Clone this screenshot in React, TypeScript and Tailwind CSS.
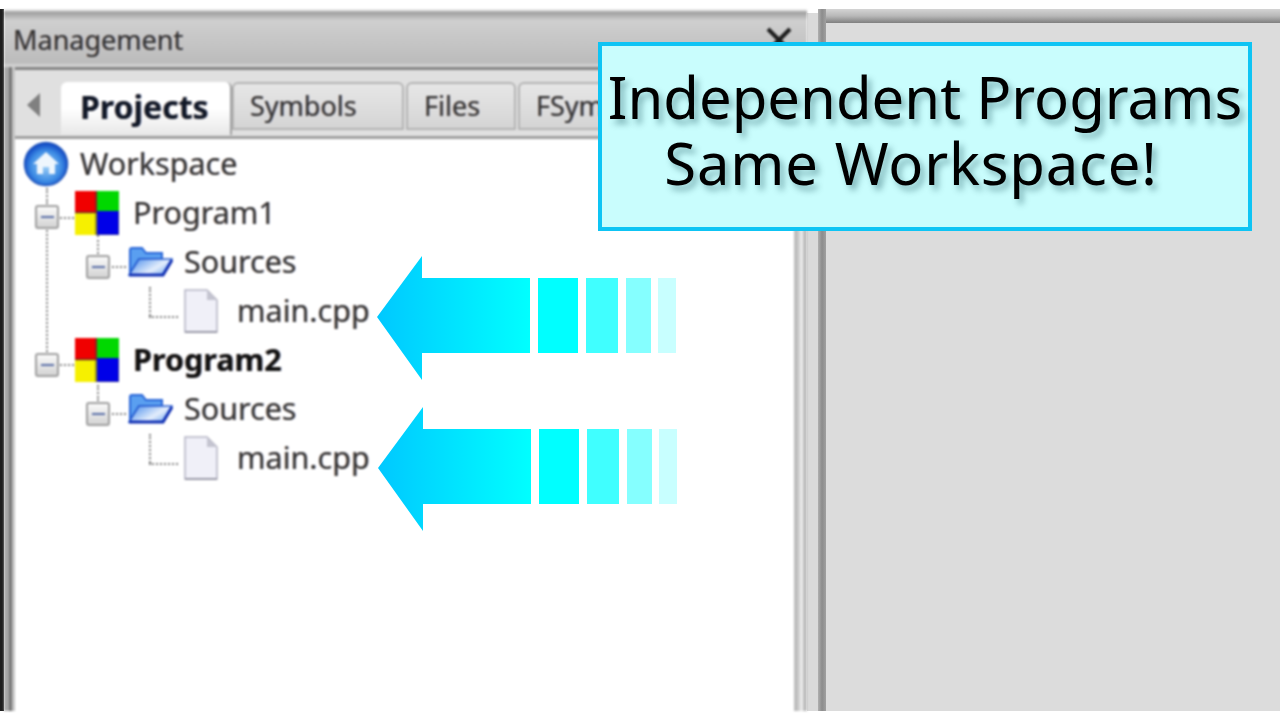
const uiFont = "[font-family:'Noto_Sans',sans-serif]";
const fringe =
  "[text-shadow:-0.6px_0_0_rgba(200,110,40,0.45),0.6px_0_0_rgba(40,90,200,0.45)]";

function Dots({ className }: { className: string }) {
  return <div className={`absolute border-dotted border-[#808080] ${className}`} />;
}

function HomeIcon() {
  return (
    <svg width="46" height="46" viewBox="0 0 46 46">
      <defs>
        <radialGradient id="globe" cx="50%" cy="55%" r="55%">
          <stop offset="0%" stopColor="#9fd0f7" />
          <stop offset="65%" stopColor="#3c8be4" />
          <stop offset="100%" stopColor="#0b3fc0" />
        </radialGradient>
      </defs>
      <circle cx="23" cy="23" r="21.5" fill="url(#globe)" stroke="#2458bb" strokeWidth="1.5" />
      <path d="M23 11 L36 23 L32 23 L32 33 L26 33 L26 26 L20 26 L20 33 L14 33 L14 23 L10 23 Z" fill="#eef6fd" />
    </svg>
  );
}

function ProjectIcon() {
  return (
    <svg width="44" height="44" viewBox="0 0 44 44">
      <rect x="0" y="0" width="22" height="22" fill="#f00000" />
      <rect x="22" y="0" width="22" height="20" fill="#00d800" />
      <rect x="0" y="22" width="22" height="22" fill="#f6f000" />
      <rect x="22" y="20" width="22" height="24" fill="#0000e8" />
      <path d="M0 21.5 H21 V44 M21 21 V0" stroke="#3a3a3a" strokeWidth="1.5" fill="none" opacity="0.7" />
      <path d="M21 44 H44 V20" stroke="#555" strokeWidth="1.5" fill="none" opacity="0.6" />
    </svg>
  );
}

function FolderIcon() {
  return (
    <svg width="46" height="30" viewBox="0 0 46 30">
      <defs>
        <linearGradient id="folder" x1="0" y1="0" x2="1" y2="0.6">
          <stop offset="0%" stopColor="#3f86ea" />
          <stop offset="70%" stopColor="#e4eefc" />
          <stop offset="100%" stopColor="#8db8f2" />
        </linearGradient>
      </defs>
      <path d="M3 26 L3 3 Q3 1 5 1 L15 1 L19 6 L35 6 L35 12 L12 12 Z" fill="#5a9ff0" stroke="#2a66d8" strokeWidth="2" />
      <path d="M2 28 L12 12 L45 12 L36 28 Z" fill="url(#folder)" stroke="#2a5fd0" strokeWidth="1.5" />
      <path d="M2 28 H36 L45 13" fill="none" stroke="#0f2fb4" strokeWidth="3" />
    </svg>
  );
}

function FileIcon() {
  return (
    <svg width="34" height="44" viewBox="0 0 34 44">
      <path d="M1 1 H23 L33 11 V43 H1 Z" fill="#f0f0f8" stroke="#b4b4c4" strokeWidth="1.5" />
      <path d="M23 1 V11 H33 Z" fill="#c4c4d0" />
      <path d="M1 43 H33" stroke="#9a9aa8" strokeWidth="2" />
    </svg>
  );
}

function Collapse({ className }: { className: string }) {
  return (
    <div
      className={`absolute w-[24px] h-[24px] rounded-[3px] border-2 border-[#a0a0a0] bg-gradient-to-b from-[#fafafa] to-[#d4d4d4] flex items-center justify-center ${className}`}
    >
      <div className="w-[13px] h-[2px] bg-[#5a6fa8]" />
    </div>
  );
}

function FadeArrow({ className }: { className: string }) {
  return (
    <div className={`absolute flex items-center h-[124px] ${className}`}>
      <svg width="153" height="124" viewBox="0 0 153 124" className="shrink-0">
        <defs>
          <linearGradient id="arrowFill" x1="0" y1="0" x2="1" y2="0">
            <stop offset="0%" stopColor="#00c8ff" />
            <stop offset="100%" stopColor="#00ffff" />
          </linearGradient>
        </defs>
        <path d="M0 61 L45 0 L45 22 L153 22 L153 97 L45 97 L45 124 Z" fill="url(#arrowFill)" />
      </svg>
      <div className="ml-[8px] w-[40px] h-[75px] mt-[-5px] bg-[#00ffff]" />
      <div className="ml-[8px] w-[32px] h-[75px] mt-[-5px] bg-[#40ffff]" />
      <div className="ml-[8px] w-[25px] h-[75px] mt-[-5px] bg-[#85ffff]" />
      <div className="ml-[7px] w-[18px] h-[75px] mt-[-5px] bg-[#c8ffff]" />
    </div>
  );
}

function Tab({ label, width, active }: { label: string; width: string; active?: boolean }) {
  return (
    <div
      className={
        active
          ? `${width} h-[53px] pl-[19px] pb-[4px] rounded-t-[6px] bg-gradient-to-b from-white via-white to-[#e8e8e8] border-r-2 border-[#a0a0a0] flex items-center text-[32px] font-bold text-[#111827] ${fringe}`
          : `${width} h-[48px] mr-[2px] pl-[16px] pt-[1px] rounded-t-[6px] border-2 border-[#b4b4b4] bg-gradient-to-b from-[#e6e6e6] via-[#dedede] to-[#d4d4d4] flex items-center text-[27px] text-[#333] ${fringe}`
      }
    >
      {label}
    </div>
  );
}

function Row({ left, icon, label, bold }: { left: string; icon: React.ReactNode; label: string; bold?: boolean }) {
  return (
    <div className={`h-[49px] flex items-center ${left}`}>
      {icon}
      <span className={`${bold ? "font-bold text-[#111]" : "text-[#333]"} text-[30.5px] ${fringe}`}>{label}</span>
    </div>
  );
}

export default function App() {
  return (
    <div className={`w-[1280px] h-[720px] bg-white flex flex-col overflow-hidden relative ${uiFont}`}>
      <div className="h-[9px] shrink-0" />
      <div className="h-[702px] flex">
        <div className="w-[4px] bg-[#1e1e1e]" />
        <div className="w-[803px] flex flex-col bg-[#a8a8a8] blur-[0.8px]">
          <div className="h-[58px] shrink-0 pl-[9px] flex items-center bg-[linear-gradient(to_bottom,#ffffff_0%,#a0a0a0_6%,#cfcfcf_20%,#bcbcbc_92%,#dadada_100%)] text-[27px] text-[#333] relative">
            <span className={`${fringe} mt-[5px]`}>Management</span>
            <svg width="26" height="26" viewBox="0 0 26 26" className="absolute left-[762px] top-[18px]">
              <path d="M2 2 L24 24 M24 2 L2 24" stroke="#1c1c1c" strokeWidth="4" fill="none" />
            </svg>
          </div>
          <div className="flex-1 flex min-h-0">
            <div className="w-[5px] bg-[#a8a8a8]" />
            <div className="w-[3px] bg-[#777]" />
            <div className="w-[785px] flex flex-col min-w-0 border-l-3 border-[#c4c4c4] border-r-3 border-r-[#bdbdbd]">
              <div className="h-[72px] shrink-0 flex bg-[#e0e0e0] pt-[12px] border-t-3 border-t-[#858585] border-b-3 border-b-[#a0a0a0]">
                <div className="w-[46px] flex items-center justify-start pl-[12px] pb-[8px]">
                  <div className="w-0 h-0 border-y-[12px] border-y-transparent border-r-[13px] border-r-[#808080]" />
                </div>
                <Tab label="Projects" width="w-[171px]" active />
                <Tab label="Symbols" width="w-[172px]" />
                <Tab label="Files" width="w-[110px]" />
                <Tab label="FSymbols" width="w-[170px]" />
              </div>
              <div className="flex-1 bg-white relative">
                <Row left="pl-[8px]" icon={<div className="w-[46px] mr-[11px]"><HomeIcon /></div>} label="Workspace" />
                <Row left="pl-[60px]" icon={<div className="w-[44px] mr-[14px]"><ProjectIcon /></div>} label="Program1" />
                <Row left="pl-[112px]" icon={<div className="w-[46px] mr-[11px]"><FolderIcon /></div>} label="Sources" />
                <Row left="pl-[169px]" icon={<div className="w-[34px] mr-[19px]"><FileIcon /></div>} label="main.cpp" />
                <Row left="pl-[60px]" icon={<div className="w-[44px] mr-[14px]"><ProjectIcon /></div>} label="Program2" bold />
                <Row left="pl-[112px]" icon={<div className="w-[46px] mr-[11px]"><FolderIcon /></div>} label="Sources" />
                <Row left="pl-[169px]" icon={<div className="w-[34px] mr-[19px]"><FileIcon /></div>} label="main.cpp" />

                <Dots className="left-[31px] top-[49px] h-[16px] border-l-2" />
                <Collapse className="left-[20px] top-[66px]" />
                <Dots className="left-[45px] top-[78px] w-[14px] border-t-2" />
                <Dots className="left-[31px] top-[91px] h-[122px] border-l-2" />
                <Dots className="left-[82px] top-[96px] h-[19px] border-l-2" />
                <Collapse className="left-[71px] top-[116px]" />
                <Dots className="left-[97px] top-[127px] w-[14px] border-t-2" />
                <Dots className="left-[134px] top-[148px] h-[29px] border-l-2" />
                <Dots className="left-[134px] top-[177px] w-[29px] border-t-2" />

                <Collapse className="left-[20px] top-[214px]" />
                <Dots className="left-[45px] top-[225px] w-[14px] border-t-2" />
                <Dots className="left-[82px] top-[246px] h-[16px] border-l-2" />
                <Collapse className="left-[71px] top-[263px]" />
                <Dots className="left-[97px] top-[274px] w-[14px] border-t-2" />
                <Dots className="left-[134px] top-[295px] h-[29px] border-l-2" />
                <Dots className="left-[134px] top-[324px] w-[29px] border-t-2" />
              </div>
            </div>
            <div className="w-[10px] flex">
              <div className="w-[6px] bg-gradient-to-r from-[#bcbcbc] via-[#dedede] to-[#f4f4f4]" />
              <div className="w-[4px] bg-[#bdbdbd]" />
            </div>
          </div>
        </div>
        <div className="w-[11px] mt-[4px] bg-[#dadada]" />
        <div className="w-[8px] bg-gradient-to-r from-[#b0b0b0] via-[#8c8c8c] to-[#a0a0a0]" />
        <div className="flex-1 flex flex-col bg-[#dcdcdc]">
          <div className="h-[14px] bg-gradient-to-b from-[#d4d4d4] via-[#b8b8b8] to-[#808080]" />
        </div>
      </div>

      <FadeArrow className="left-[377px] top-[256px]" />
      <FadeArrow className="left-[378px] top-[407px]" />

      <div className="absolute left-[598px] top-[42px] w-[654px] h-[189px] border-4 border-[#0ec4f4] bg-[#c9fdfd] flex flex-col items-center justify-center text-black text-[58px] leading-[66px] [text-shadow:4px_5px_6px_rgba(0,60,70,0.38)] pb-[14px]">
        <span>Independent Programs</span>
        <span className="pr-[28px] tracking-[0.8px]">Same Workspace!</span>
      </div>
    </div>
  );
}
